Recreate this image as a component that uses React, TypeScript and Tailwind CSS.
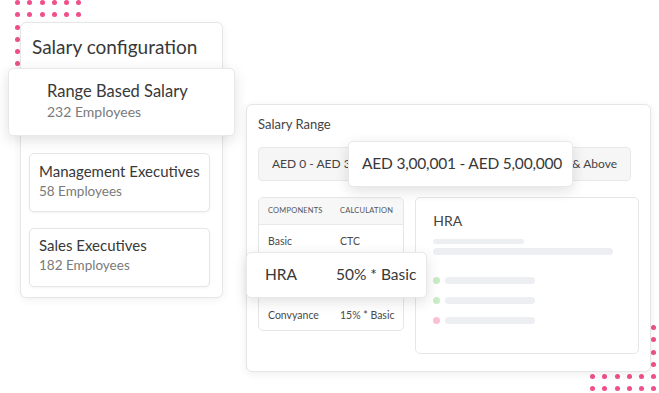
import React from "react";

const Dots = ({ cols, rows }: { cols: number; rows: number }) => (
  <div
    className="grid gap-x-[7.3px] gap-y-[7.3px]"
    style={{ gridTemplateColumns: `repeat(${cols}, 5px)` }}
  >
    {Array.from({ length: cols * rows }).map((_, i) => (
      <span key={i} className="block h-[5px] w-[5px] rounded-full bg-[#ef4f8a]" />
    ))}
  </div>
);

export default function App() {
  return (
    <div
      className="relative h-[393px] w-[659px] overflow-hidden bg-white text-[#383838]"
      style={{ fontFamily: "Lato, 'Open Sans', sans-serif" }}
    >
      {/* dot patterns */}
      <div className="absolute left-[15px] top-0">
        <Dots cols={6} rows={6} />
      </div>
      <div className="absolute left-[590px] top-[325px]">
        <Dots cols={6} rows={6} />
      </div>

      {/* left card */}
      <div className="absolute left-[20px] top-[22px] h-[276px] w-[203px] rounded-[6px] border border-[#e6e6e6] bg-white shadow-[0_2px_8px_rgba(0,0,0,0.06)]">
        <div className="pl-[11px] pt-[12px] text-[19px] leading-[24px] text-[#383838]">Salary configuration</div>
        <div className="mt-[94px] flex flex-col gap-[16px] pl-[8px]">
          <div className="flex h-[59px] w-[181px] flex-col rounded-[5px] border border-[#e6e6e6] bg-white pl-[9px] pt-[7px] shadow-[0_1px_3px_rgba(0,0,0,0.05)]">
            <div className="text-[15px] leading-[20px]">Management Executives</div>
            <div className="mt-[2px] text-[13.5px] leading-[17px] text-[#7a7a7a]">58 Employees</div>
          </div>
          <div className="flex h-[59px] w-[181px] flex-col rounded-[5px] border border-[#e6e6e6] bg-white pl-[9px] pt-[6px] shadow-[0_1px_3px_rgba(0,0,0,0.05)]">
            <div className="text-[15px] leading-[20px]">Sales Executives</div>
            <div className="mt-[2px] text-[13.5px] leading-[17px] text-[#7a7a7a]">182 Employees</div>
          </div>
        </div>
      </div>

      {/* floating Range Based Salary */}
      <div className="absolute left-[8px] top-[68px] flex h-[68px] w-[227px] flex-col rounded-[5px] border border-[#e8e8e8] bg-white pl-[38px] pt-[12px] shadow-[0_4px_14px_rgba(0,0,0,0.12)]">
        <div className="text-[16.5px] leading-[21px]">Range Based Salary</div>
        <div className="mt-[1px] text-[14px] leading-[17px] text-[#7a7a7a]">232 Employees</div>
      </div>

      {/* right panel */}
      <div className="absolute left-[246px] top-[104px] h-[268px] w-[405px] rounded-[6px] border border-[#e6e6e6] bg-white px-[11px] shadow-[0_2px_8px_rgba(0,0,0,0.07)]">
        <div className="pt-[11px] text-[13px] leading-[17px] text-[#444]">Salary Range</div>
        <div className="mt-[14px] flex h-[34px] w-[373px] items-center justify-between rounded-[4px] border border-[#e8e8e8] bg-[#f6f6f6] px-[13px] text-[12px] text-[#444]">
          <span>AED 0 - AED 3</span>
          <span>& Above</span>
        </div>
        <div className="mt-[16px] flex gap-[11px]">
          {/* table */}
          <div className="h-[134px] w-[148px] overflow-hidden rounded-[5px] border border-[#e6e6e6] bg-white">
            <div className="flex h-[27px] items-center border-b border-[#e8e8e8] bg-[#f7f7f7] pl-[9px] text-[7.5px] tracking-[0.2px] text-[#555]">
              <span className="w-[72px]">COMPONENTS</span>
              <span>CALCULATION</span>
            </div>
            <div className="flex h-[33px] items-center pl-[9px] text-[10.5px] text-[#4a4a4a]">
              <span className="w-[72px]">Basic</span>
              <span>CTC</span>
            </div>
            <div className="h-[42px]" />
            <div className="flex h-[32px] items-center pl-[9px] text-[10.5px] text-[#4a4a4a]">
              <span className="w-[72px]">Convyance</span>
              <span>15% * Basic</span>
            </div>
          </div>
          {/* HRA card */}
          <div className="h-[157px] w-[226px] rounded-[5px] border border-[#e6e6e6] bg-white pl-[17px] pt-[14px]">
            <div className="text-[14px] leading-[18px] text-[#444]">HRA</div>
            <div className="mt-[9px] h-[5px] w-[91px] rounded-full bg-[#eceef1]" />
            <div className="mt-[4px] h-[7px] w-[180px] rounded-full bg-[#eceef1]" />
            <div className="mt-[22px] flex flex-col gap-[13px]">
              {["#c9ecc7", "#c9ecc7", "#fcc0d4"].map((c, i) => (
                <div key={i} className="flex items-center gap-[5px]">
                  <span className="block h-[7px] w-[7px] rounded-full" style={{ backgroundColor: c }} />
                  <span className="block h-[7px] w-[90px] rounded-full bg-[#eceef1]" />
                </div>
              ))}
            </div>
          </div>
        </div>
      </div>

      {/* floating AED tab */}
      <div className="absolute left-[348px] top-[141px] flex h-[46px] w-[225px] items-center whitespace-nowrap rounded-[5px] border border-[#e8e8e8] bg-white pl-[13px] text-[15.5px] tracking-[-0.2px] shadow-[0_4px_14px_rgba(0,0,0,0.12)]">
        AED 3,00,001 - AED 5,00,000
      </div>

      {/* floating HRA row */}
      <div className="absolute left-[246px] top-[252px] flex h-[46px] w-[181px] items-center whitespace-nowrap rounded-[5px] border border-[#e8e8e8] bg-white pl-[18px] text-[15.5px] shadow-[0_4px_14px_rgba(0,0,0,0.12)]">
        <span className="w-[71px]">HRA</span>
        <span>50% * Basic</span>
      </div>
    </div>
  );
}
